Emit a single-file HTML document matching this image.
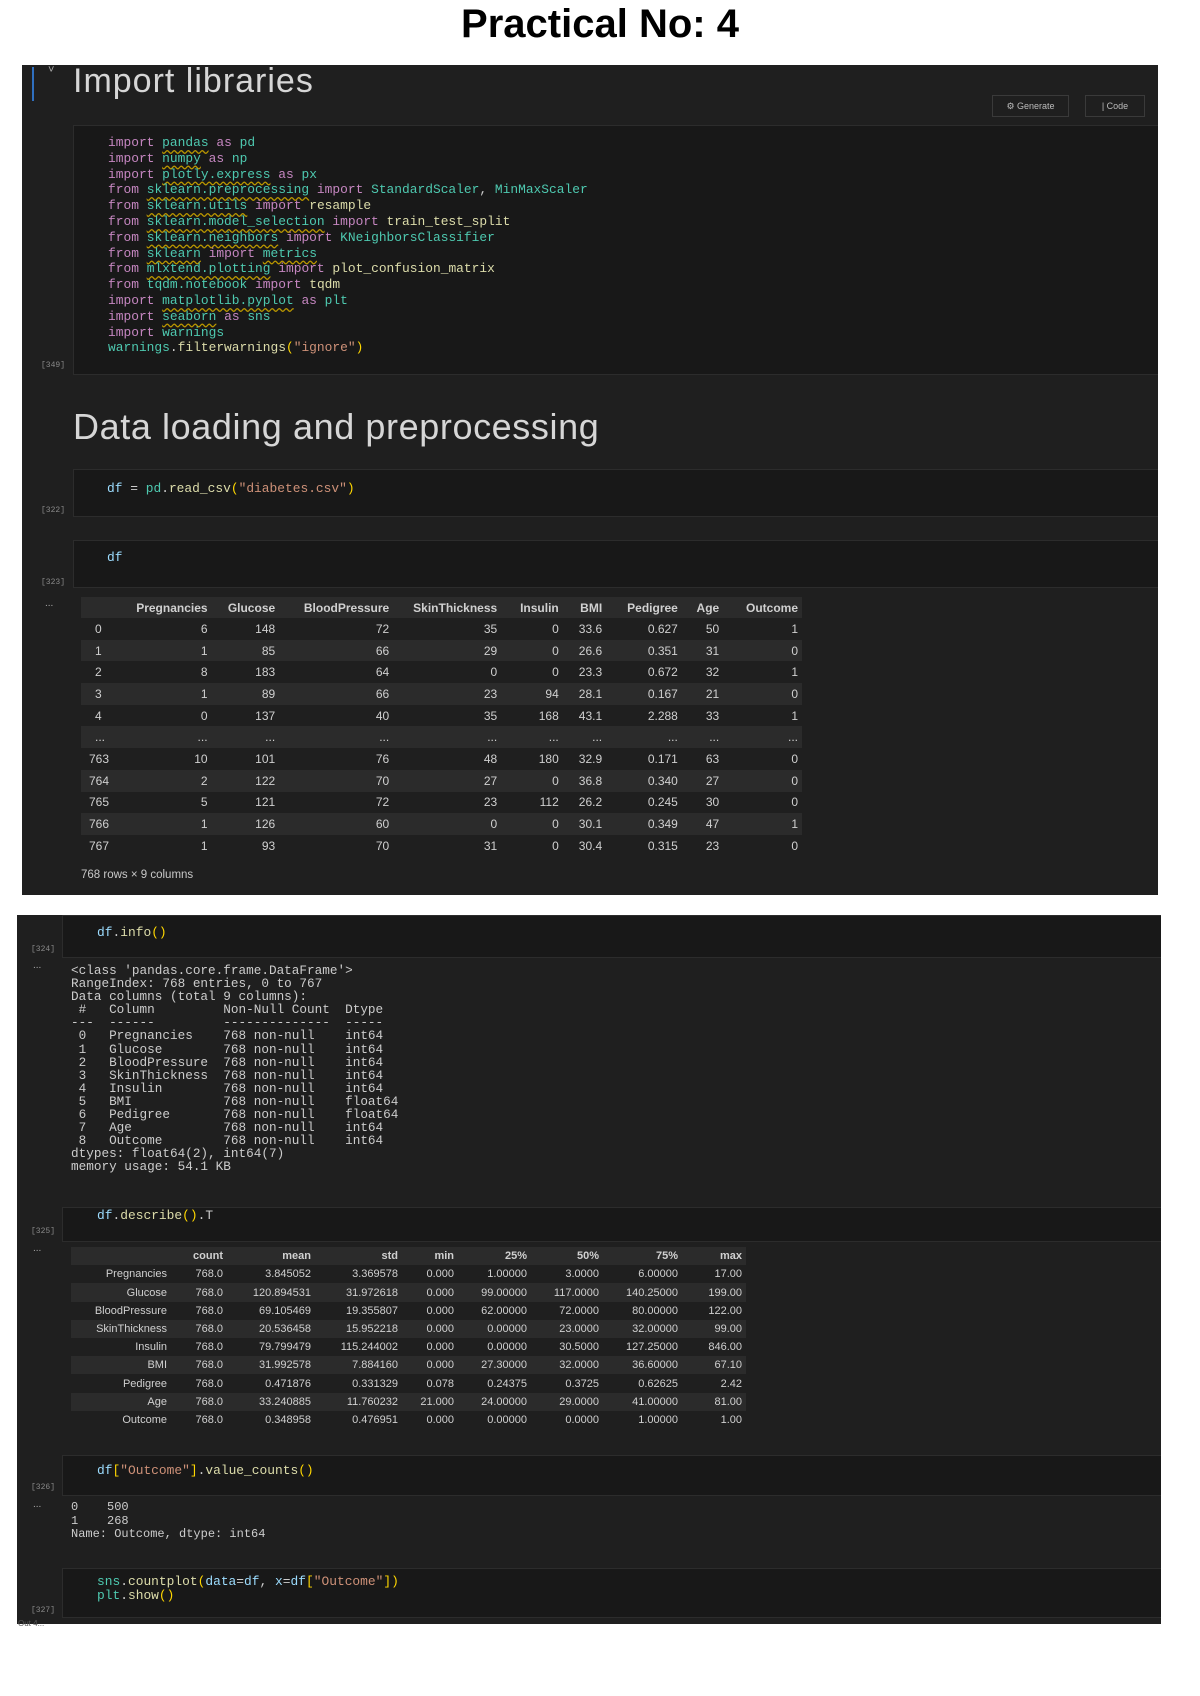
<!DOCTYPE html>
<html><head><meta charset="utf-8"><style>
*{margin:0;padding:0;box-sizing:border-box}
body{width:1200px;height:1696px;background:#fff;position:relative;overflow:hidden;font-family:"Liberation Sans",sans-serif}
.a{position:absolute}
.box{position:absolute;background:#1f1f1f}
.cell{position:absolute;background:#181818;border:1px solid #2c2c2c;border-right:none}
.mono{font-family:"Liberation Mono",monospace;font-size:12.9px;white-space:pre;color:#cccccc}
.cnt{position:absolute;font-family:"Liberation Mono",monospace;font-size:8px;color:#888}
.k{color:#c586c0}.m{color:#4ec9b0}.v{color:#9cdcfe}.s{color:#ce9178}.f{color:#dcdcaa}.p{color:#ffd700}.w{color:#d4d4d4}
.u{text-decoration:underline wavy #b89500;text-underline-offset:3px}
table{border-collapse:collapse;font-family:"Liberation Sans",sans-serif;color:#d0d0d0;font-size:12px}
td,th{text-align:right;padding:0 4px;white-space:nowrap}
th{font-weight:bold}
tr.l{background:#2b2b2b}
h1{font-family:"Liberation Sans",sans-serif;font-weight:normal;color:#d6d6d6}
</style></head><body>
<div class="a" style="left:0;width:1200px;top:2px;text-align:center;font-weight:bold;font-size:40px;color:#000">Practical No: 4</div>

<div class="box" style="left:22px;top:65px;width:1136px;height:830px"></div>
<div class="a" style="left:32px;top:67px;width:2px;height:34px;background:#2f6fbf"></div>
<div class="a" style="left:48px;top:64px;color:#aaa;font-size:11px">˅</div>
<h1 class="a" style="left:73px;top:62px;font-size:34px;letter-spacing:1px">Import libraries</h1>
<div class="a" style="left:992px;top:95px;width:77px;height:22px;border:1px solid #3a3a3a;color:#bbb;font-size:9px;line-height:20px;text-align:center">⚙ Generate</div>
<div class="a" style="left:1085px;top:95px;width:60px;height:22px;border:1px solid #3a3a3a;color:#bbb;font-size:9px;line-height:20px;text-align:center">| Code</div>

<div class="cell" style="left:73px;top:125px;width:1085px;height:250px"></div>
<div class="a mono" style="left:108px;top:135px;line-height:15.8px"><span class="k">import</span> <span class="m u">pandas</span> <span class="k">as</span> <span class="m">pd</span>
<span class="k">import</span> <span class="m u">numpy</span> <span class="k">as</span> <span class="m">np</span>
<span class="k">import</span> <span class="m u">plotly.express</span> <span class="k">as</span> <span class="m">px</span>
<span class="k">from</span> <span class="m u">sklearn.preprocessing</span> <span class="k">import</span> <span class="m">StandardScaler</span>, <span class="m">MinMaxScaler</span>
<span class="k">from</span> <span class="m u">sklearn.utils</span> <span class="k">import</span> <span class="f">resample</span>
<span class="k">from</span> <span class="m u">sklearn.model_selection</span> <span class="k">import</span> <span class="f">train_test_split</span>
<span class="k">from</span> <span class="m u">sklearn.neighbors</span> <span class="k">import</span> <span class="m">KNeighborsClassifier</span>
<span class="k">from</span> <span class="m u">sklearn</span> <span class="k">import</span> <span class="m u">metrics</span>
<span class="k">from</span> <span class="m u">mlxtend.plotting</span> <span class="k">import</span> <span class="f">plot_confusion_matrix</span>
<span class="k">from</span> <span class="m">tqdm.notebook</span> <span class="k">import</span> <span class="f">tqdm</span>
<span class="k">import</span> <span class="m u">matplotlib.pyplot</span> <span class="k">as</span> <span class="m">plt</span>
<span class="k">import</span> <span class="m u">seaborn</span> <span class="k">as</span> <span class="m">sns</span>
<span class="k">import</span> <span class="m">warnings</span>
<span class="m">warnings</span>.<span class="f">filterwarnings</span><span class="p">(</span><span class="s">"ignore"</span><span class="p">)</span></div>
<div class="cnt" style="left:41px;top:361px">[349]</div>

<h1 class="a" style="left:73px;top:406px;font-size:36px;letter-spacing:0.6px">Data loading and preprocessing</h1>

<div class="cell" style="left:73px;top:469px;width:1085px;height:48px"></div>
<div class="a mono" style="left:107px;top:481px"><span class="v">df</span> = <span class="m">pd</span>.<span class="f">read_csv</span><span class="p">(</span><span class="s">"diabetes.csv"</span><span class="p">)</span></div>
<div class="cnt" style="left:41px;top:506px">[322]</div>

<div class="cell" style="left:73px;top:540px;width:1085px;height:48px"></div>
<div class="a mono" style="left:107px;top:550px"><span class="v">df</span></div>
<div class="cnt" style="left:41px;top:578px">[323]</div>
<div class="a" style="left:45px;top:598px;color:#aaa;font-size:10px">...</div>

<table class="a" style="left:81px;top:597px;width:721px">
<colgroup><col style="width:50px"><col style="width:78px"><col style="width:67px"><col style="width:113px"><col style="width:107px"><col style="width:61px"><col style="width:43px"><col style="width:75px"><col style="width:41px"><col style="width:78px"></colgroup>
<tr class="l" style="height:21px"><th></th><th>Pregnancies</th><th>Glucose</th><th>BloodPressure</th><th>SkinThickness</th><th>Insulin</th><th>BMI</th><th>Pedigree</th><th>Age</th><th>Outcome</th></tr>
<tr style="height:21.7px"><td style="text-align:left;padding-left:14px">0</td><td>6</td><td>148</td><td>72</td><td>35</td><td>0</td><td>33.6</td><td>0.627</td><td>50</td><td>1</td></tr>
<tr class="l" style="height:21.7px"><td style="text-align:left;padding-left:14px">1</td><td>1</td><td>85</td><td>66</td><td>29</td><td>0</td><td>26.6</td><td>0.351</td><td>31</td><td>0</td></tr>
<tr style="height:21.7px"><td style="text-align:left;padding-left:14px">2</td><td>8</td><td>183</td><td>64</td><td>0</td><td>0</td><td>23.3</td><td>0.672</td><td>32</td><td>1</td></tr>
<tr class="l" style="height:21.7px"><td style="text-align:left;padding-left:14px">3</td><td>1</td><td>89</td><td>66</td><td>23</td><td>94</td><td>28.1</td><td>0.167</td><td>21</td><td>0</td></tr>
<tr style="height:21.7px"><td style="text-align:left;padding-left:14px">4</td><td>0</td><td>137</td><td>40</td><td>35</td><td>168</td><td>43.1</td><td>2.288</td><td>33</td><td>1</td></tr>
<tr class="l" style="height:21.7px"><td style="text-align:left;padding-left:14px">...</td><td>...</td><td>...</td><td>...</td><td>...</td><td>...</td><td>...</td><td>...</td><td>...</td><td>...</td></tr>
<tr style="height:21.7px"><td style="text-align:left;padding-left:8px">763</td><td>10</td><td>101</td><td>76</td><td>48</td><td>180</td><td>32.9</td><td>0.171</td><td>63</td><td>0</td></tr>
<tr class="l" style="height:21.7px"><td style="text-align:left;padding-left:8px">764</td><td>2</td><td>122</td><td>70</td><td>27</td><td>0</td><td>36.8</td><td>0.340</td><td>27</td><td>0</td></tr>
<tr style="height:21.7px"><td style="text-align:left;padding-left:8px">765</td><td>5</td><td>121</td><td>72</td><td>23</td><td>112</td><td>26.2</td><td>0.245</td><td>30</td><td>0</td></tr>
<tr class="l" style="height:21.7px"><td style="text-align:left;padding-left:8px">766</td><td>1</td><td>126</td><td>60</td><td>0</td><td>0</td><td>30.1</td><td>0.349</td><td>47</td><td>1</td></tr>
<tr style="height:21.7px"><td style="text-align:left;padding-left:8px">767</td><td>1</td><td>93</td><td>70</td><td>31</td><td>0</td><td>30.4</td><td>0.315</td><td>23</td><td>0</td></tr>
</table>
<div class="a" style="left:81px;top:869px;color:#c8c8c8;font-size:11.5px">768 rows × 9 columns</div>

<div class="box" style="left:17px;top:915px;width:1144px;height:709px"></div>
<div class="cell" style="left:62px;top:915px;width:1099px;height:43px"></div>
<div class="a mono" style="left:97px;top:925px"><span class="v">df</span>.<span class="f">info</span><span class="p">()</span></div>
<div class="cnt" style="left:31px;top:945px">[324]</div>
<div class="a" style="left:33px;top:960px;color:#aaa;font-size:10px">...</div>
<div class="a mono" style="left:71px;top:964px;line-height:13.1px;font-size:12.7px">&lt;class 'pandas.core.frame.DataFrame'&gt;
RangeIndex: 768 entries, 0 to 767
Data columns (total 9 columns):
 #   Column         Non-Null Count  Dtype  
---  ------         --------------  -----  
 0   Pregnancies    768 non-null    int64  
 1   Glucose        768 non-null    int64  
 2   BloodPressure  768 non-null    int64  
 3   SkinThickness  768 non-null    int64  
 4   Insulin        768 non-null    int64  
 5   BMI            768 non-null    float64
 6   Pedigree       768 non-null    float64
 7   Age            768 non-null    int64  
 8   Outcome        768 non-null    int64  
dtypes: float64(2), int64(7)
memory usage: 54.1 KB</div>

<div class="cell" style="left:62px;top:1207px;width:1099px;height:35px"></div>
<div class="a mono" style="left:97px;top:1208px"><span class="v">df</span>.<span class="f">describe</span><span class="p">()</span>.T</div>
<div class="cnt" style="left:31px;top:1227px">[325]</div>
<div class="a" style="left:33px;top:1243px;color:#aaa;font-size:10px">...</div>

<table class="a" style="left:71px;top:1247px;width:675px;font-size:11px">
<colgroup><col style="width:100px"><col style="width:56px"><col style="width:88px"><col style="width:87px"><col style="width:56px"><col style="width:73px"><col style="width:72px"><col style="width:79px"><col style="width:64px"></colgroup>
<tr class="l" style="height:18.3px"><th></th><th>count</th><th>mean</th><th>std</th><th>min</th><th>25%</th><th>50%</th><th>75%</th><th>max</th></tr>
<tr style="height:18.2px"><th style="font-weight:normal">Pregnancies</th><td>768.0</td><td>3.845052</td><td>3.369578</td><td>0.000</td><td>1.00000</td><td>3.0000</td><td>6.00000</td><td>17.00</td></tr>
<tr class="l" style="height:18.2px"><th style="font-weight:normal">Glucose</th><td>768.0</td><td>120.894531</td><td>31.972618</td><td>0.000</td><td>99.00000</td><td>117.0000</td><td>140.25000</td><td>199.00</td></tr>
<tr style="height:18.2px"><th style="font-weight:normal">BloodPressure</th><td>768.0</td><td>69.105469</td><td>19.355807</td><td>0.000</td><td>62.00000</td><td>72.0000</td><td>80.00000</td><td>122.00</td></tr>
<tr class="l" style="height:18.2px"><th style="font-weight:normal">SkinThickness</th><td>768.0</td><td>20.536458</td><td>15.952218</td><td>0.000</td><td>0.00000</td><td>23.0000</td><td>32.00000</td><td>99.00</td></tr>
<tr style="height:18.2px"><th style="font-weight:normal">Insulin</th><td>768.0</td><td>79.799479</td><td>115.244002</td><td>0.000</td><td>0.00000</td><td>30.5000</td><td>127.25000</td><td>846.00</td></tr>
<tr class="l" style="height:18.2px"><th style="font-weight:normal">BMI</th><td>768.0</td><td>31.992578</td><td>7.884160</td><td>0.000</td><td>27.30000</td><td>32.0000</td><td>36.60000</td><td>67.10</td></tr>
<tr style="height:18.2px"><th style="font-weight:normal">Pedigree</th><td>768.0</td><td>0.471876</td><td>0.331329</td><td>0.078</td><td>0.24375</td><td>0.3725</td><td>0.62625</td><td>2.42</td></tr>
<tr class="l" style="height:18.2px"><th style="font-weight:normal">Age</th><td>768.0</td><td>33.240885</td><td>11.760232</td><td>21.000</td><td>24.00000</td><td>29.0000</td><td>41.00000</td><td>81.00</td></tr>
<tr style="height:18.2px"><th style="font-weight:normal">Outcome</th><td>768.0</td><td>0.348958</td><td>0.476951</td><td>0.000</td><td>0.00000</td><td>0.0000</td><td>1.00000</td><td>1.00</td></tr>
</table>

<div class="cell" style="left:62px;top:1455px;width:1099px;height:41px"></div>
<div class="a mono" style="left:97px;top:1463px"><span class="v">df</span><span class="p">[</span><span class="s">"Outcome"</span><span class="p">]</span>.<span class="f">value_counts</span><span class="p">()</span></div>
<div class="cnt" style="left:31px;top:1483px">[326]</div>
<div class="a" style="left:33px;top:1499px;color:#aaa;font-size:10px">...</div>
<div class="a mono" style="left:71px;top:1501px;line-height:13.5px;font-size:12px">0    500
1    268
Name: Outcome, dtype: int64</div>

<div class="cell" style="left:62px;top:1568px;width:1099px;height:50px"></div>
<div class="a mono" style="left:97px;top:1575px;line-height:14px"><span class="m">sns</span>.<span class="f">countplot</span><span class="p">(</span><span class="v">data</span>=<span class="v">df</span>, <span class="v">x</span>=<span class="v">df</span><span class="p">[</span><span class="s">"Outcome"</span><span class="p">])</span>
<span class="m">plt</span>.<span class="f">show</span><span class="p">()</span></div>
<div class="cnt" style="left:31px;top:1606px">[327]</div>
<div class="a" style="left:18px;top:1619px;color:#555;font-size:8px">Out 4...</div>
</body></html>
